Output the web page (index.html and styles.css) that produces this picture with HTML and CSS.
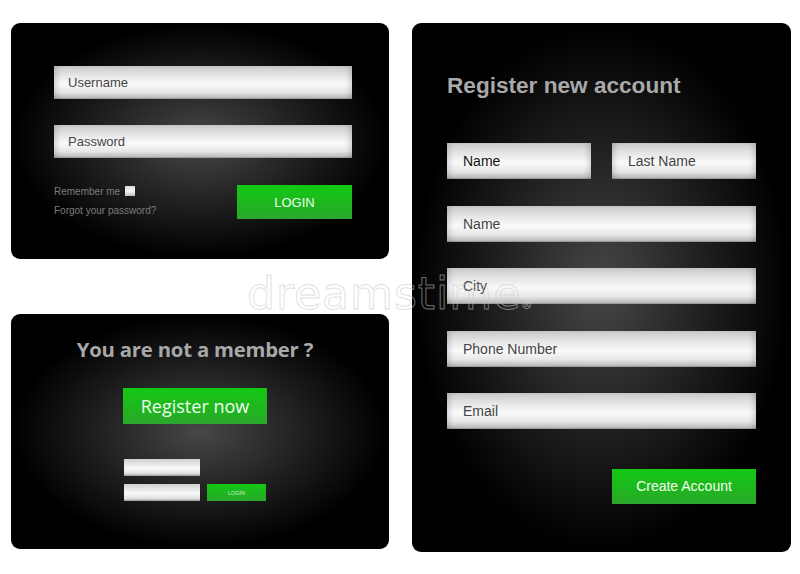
FILE: index.html
```html
<!DOCTYPE html>
<html lang="en">
<head>
    <meta charset="UTF-8">
    <meta name="viewport" content="width=device-width, initial-scale=1.0">
    <title>Login / Register forms</title>
    <link rel="stylesheet" href="styles.css">
</head>
<body>
    <div class="page">
        <div class="left-col">
            <div class="card login-card">
                <div class="field">Username</div>
                <div class="field">Password</div>
                <div class="login-row">
                    <div class="login-links">
                        <div class="remember">Remember me <span class="check"></span></div>
                        <div class="forgot">Forgot your password?</div>
                    </div>
                    <div class="btn login-btn">LOGIN</div>
                </div>
            </div>

            <div class="card member-card">
                <h2>You are not a member ?</h2>
                <div class="btn register-btn">Register now</div>
                <div class="mini-form">
                    <div class="mini-field"></div>
                    <div class="mini-row">
                        <div class="mini-field"></div>
                        <div class="btn mini-btn">LOGIN</div>
                    </div>
                </div>
            </div>
        </div>

        <div class="card register-card">
            <h1>Register new account</h1>
            <div class="row-two">
                <div class="field big dark">Name</div>
                <div class="field big">Last Name</div>
            </div>
            <div class="field big">Name</div>
            <div class="field big">City</div>
            <div class="field big">Phone Number</div>
            <div class="field big">Email</div>
            <div class="btn create-btn">Create Account</div>
        </div>
    </div>

    <div class="watermark">dreamstime<span class="reg">®</span></div>
</body>
</html>
```

FILE: styles.css
```css
* {
    margin: 0;
    padding: 0;
    box-sizing: border-box;
}

body {
    font-family: 'Liberation Sans', Arial, sans-serif;
    background: #ffffff;
    width: 800px;
    height: 574px;
    overflow: hidden;
    position: relative;
}

.page {
    display: grid;
    grid-template-columns: 378px 379px;
    gap: 23px;
    padding: 23px 0 0 11px;
}

.left-col {
    display: flex;
    flex-direction: column;
    gap: 55px;
}

.card {
    background: radial-gradient(ellipse at center, #474747 0%, #1e1e1e 40%, #000000 70%);
    border-radius: 9px;
}

/* champs argentés */
.field {
    height: 33px;
    display: flex;
    align-items: center;
    padding-left: 14px;
    font-size: 13px;
    color: #444;
    background: linear-gradient(180deg, #c9c9c9 0%, #e2e2e2 25%, #fafafa 55%, #e6e6e6 80%, #b9b9b9 97%, #8a8a8a 100%);
    box-shadow: inset 6px 0 6px -4px rgba(0, 0, 0, 0.18), inset -6px 0 6px -4px rgba(0, 0, 0, 0.18);
}

.btn {
    background: linear-gradient(180deg, #14c814 0%, #1fb51f 60%, #2ca82c 100%);
    color: #f0fff0;
    display: flex;
    align-items: center;
    justify-content: center;
}

/* carte connexion */
.login-card {
    height: 236px;
    padding: 43px 37px 0 43px;
    display: flex;
    flex-direction: column;
    gap: 26px;
}

.login-row {
    display: flex;
    justify-content: space-between;
    align-items: flex-start;
    margin-top: 1px;
}

.login-links {
    font-size: 10px;
    color: #7c7c7c;
}

.remember {
    display: flex;
    align-items: center;
    gap: 5px;
    height: 12px;
}

.check {
    width: 10px;
    height: 10px;
    background: linear-gradient(180deg, #d8d8d8, #f4f4f4 50%, #c0c0c0);
}

.forgot {
    margin-top: 8px;
}

.login-btn {
    width: 115px;
    height: 34px;
    font-size: 13px;
}

/* carte membre */
.member-card {
    height: 235px;
    padding-right: 10px;
    display: flex;
    flex-direction: column;
    align-items: center;
}

.member-card h2 {
    font-family: 'Open Sans', sans-serif;
    font-weight: 700;
    font-size: 20.3px;
    color: #a8a8a8;
    margin-top: 21px;
    height: 30px;
    letter-spacing: -0.2px;
}

.register-btn {
    font-family: 'Open Sans', sans-serif;
    width: 144px;
    height: 36px;
    font-size: 18px;
    margin-top: 23px;
}

.mini-form {
    margin-top: 35px;
    display: flex;
    flex-direction: column;
    gap: 8px;
    width: 142px;
}

.mini-field {
    width: 76px;
    height: 17px;
    background: linear-gradient(180deg, #cfcfcf 0%, #fafafa 55%, #e0e0e0 85%, #9a9a9a 100%);
}

.mini-row {
    display: flex;
    gap: 7px;
}

.mini-btn {
    width: 59px;
    height: 17px;
    font-size: 5.5px;
    color: #cfe9cf;
}

/* carte inscription */
.register-card {
    height: 529px;
    padding: 50px 35px 0 35px;
    display: flex;
    flex-direction: column;
}

.register-card h1 {
    font-size: 22.6px;
    font-weight: 700;
    color: #a9a9a9;
    height: 25px;
    margin-bottom: 45px;
}

.field.big {
    height: 36px;
    padding-left: 16px;
    font-size: 14px;
    margin-bottom: 26.5px;
}

.field.dark {
    color: #111;
}

.row-two {
    display: flex;
    gap: 21px;
}

.row-two .field {
    flex: 1;
}

.create-btn {
    align-self: flex-end;
    width: 144px;
    height: 35px;
    font-size: 14px;
    margin-top: 13px;
}

/* filigrane */
.watermark {
    position: absolute;
    left: 247px;
    top: 268px;
    font-family: 'DejaVu Sans', sans-serif;
    font-size: 44px;
    letter-spacing: 1px;
    color: transparent;
    -webkit-text-stroke: 1px rgba(200, 200, 200, 0.55);
    pointer-events: none;
}

.watermark .reg {
    font-size: 11px;
    -webkit-text-stroke: 0.5px rgba(200, 200, 200, 0.55);
}
```
